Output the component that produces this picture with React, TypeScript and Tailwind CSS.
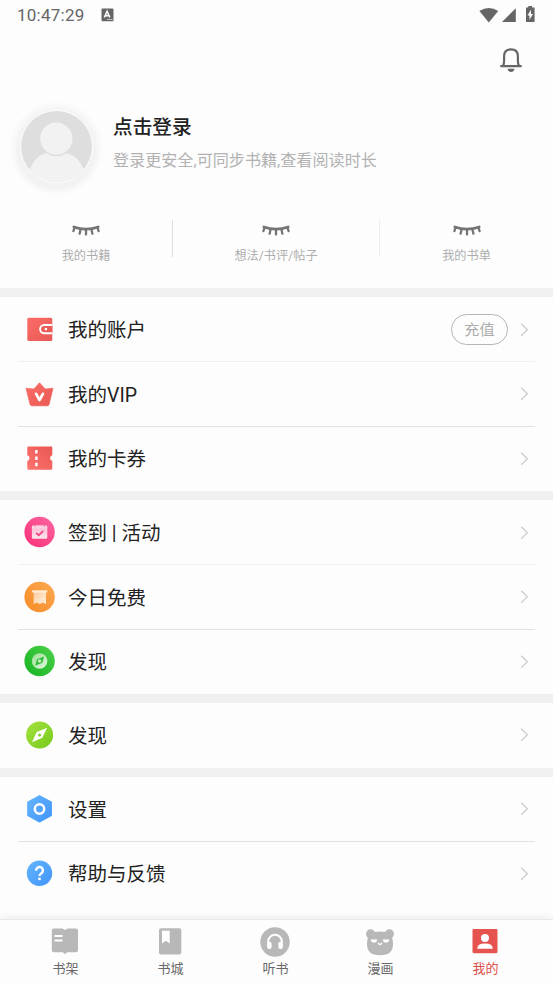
import type { ReactNode } from 'react';

const Sep = ({ strong }: { strong?: boolean }) => (
  <div className={`absolute left-[18px] right-[18px] h-px ${strong ? '-bottom-[0.4px] bg-[#e2e2e2]' : 'bottom-0 bg-[#f1f1f1]'}`} />
);

const Chevron = () => (
  <svg width="9" height="14" viewBox="0 0 9 14" fill="none" stroke="#cdcdcd" strokeWidth="1.3">
    <path d="M1.2 .7L7.4 6.7L1.2 12.7" />
  </svg>
);

function Row({ icon, label, sep, action }: { icon: ReactNode; label: string; sep?: 'soft' | 'strong'; action?: string }) {
  return (
    <div className="relative flex h-[64.5px] items-center pl-[23px] pr-6">
      <div className="flex w-[33px] shrink-0 justify-center">{icon}</div>
      <span className="ml-3 flex-1 pt-[3px] text-[19.5px] leading-7 text-[#222]">{label}</span>
      {action && (
        <span className="mr-3 flex h-[31px] w-[57px] items-center justify-center rounded-full border border-[#b5b5b5] pt-[2px] text-[15.2px] leading-none text-[#adadad]">
          {action}
        </span>
      )}
      <Chevron />
      {sep && <Sep strong={sep === 'strong'} />}
    </div>
  );
}

const Gap = () => <div className="h-[9.4px] bg-[#f0f0f0]" />;

const Grad = ({ id, from, to, flip }: { id: string; from: string; to: string; flip?: boolean }) => (
  <linearGradient id={id} x1={flip ? '1' : '0'} y1="0" x2={flip ? '0' : '1'} y2="1">
    <stop stopColor={from} />
    <stop offset="1" stopColor={to} />
  </linearGradient>
);

const Wallet = () => (
  <svg width="33" height="33" viewBox="0 0 33 33">
    <defs><Grad id="wal" from="#fb6d68" to="#ea5954" /></defs>
    <rect x="4.3" y="4.7" width="25" height="23.2" rx="1.5" fill="url(#wal)" />
    <path d="M29.4 11.9H21.3a4 4 0 0 0 0 8.4H29.4" fill="#e95b56" stroke="#fff" strokeWidth="2" />
    <circle cx="22.9" cy="16.1" r="1.3" fill="#fff" />
  </svg>
);

const Crown = () => (
  <svg width="33" height="33" viewBox="0 0 33 33">
    <defs><Grad id="crn" from="#fb6d68" to="#ea5954" /></defs>
    <path d="M16.5 4.8L22.3 11L30 10.2L26 26.6Q25.7 27.8 24.4 27.8H8.8Q7.4 27.8 7.1 26.6L3 10.2L10.9 11Z" fill="url(#crn)" stroke="url(#crn)" strokeLinejoin="round" strokeWidth=".7" />
    <path d="M13.1 15.8L16.5 22L19.9 15.8" fill="none" stroke="#fff" strokeWidth="2.7" strokeLinecap="round" strokeLinejoin="round" />
  </svg>
);

const Ticket = () => (
  <svg width="33" height="33" viewBox="0 0 33 33">
    <defs><Grad id="tic" from="#e95752" to="#fc7470" flip /></defs>
    <path d="M5.4 4.6H28.2Q29.3 4.6 29.3 5.7V13.2A3 3 0 0 0 29.3 19V26.6Q29.3 27.7 28.2 27.7H5.4Q4.3 27.7 4.3 26.6V19A3 3 0 0 0 4.3 13.2V5.7Q4.3 4.6 5.4 4.6Z" fill="url(#tic)" />
    <path d="M13.4 8v3.5M13.4 14.4v3.5M13.4 20.8v3.5" stroke="#fff" strokeWidth="2.4" />
  </svg>
);

const Calendar = () => (
  <svg width="33" height="33" viewBox="0 0 33 33">
    <defs>
      <Grad id="cal" from="#fb67a2" to="#fb2e76" flip />
      <linearGradient id="calp" x1="0" y1="0" x2="0" y2="1"><stop stopColor="#fcb5d0" /><stop offset="1" stopColor="#ffe6ee" /></linearGradient>
    </defs>
    <circle cx="16.6" cy="16" r="15.2" fill="url(#cal)" />
    <rect x="8.9" y="9.6" width="15.4" height="13.2" rx="1.5" fill="url(#calp)" />
    <path d="M8.9 12.4V11Q8.9 9.5 10.4 9.5H22.8Q24.3 9.5 24.3 11V12.4Z" fill="#ffd4e2" />
    <path d="M12 8.6v2.2M21.2 8.6v2.2" stroke="#f96e9f" strokeWidth="1.2" />
    <path d="M13.2 16.9L15.7 19.3L20.2 14.9" fill="none" stroke="#f43f7f" strokeWidth="1.7" />
  </svg>
);

const Banner = () => (
  <svg width="33" height="33" viewBox="0 0 33 33">
    <defs>
      <Grad id="ban" from="#fda950" to="#f68b28" flip />
      <linearGradient id="banp" x1="0" y1="0" x2="1" y2="1"><stop stopColor="#fccd9d" /><stop offset="1" stopColor="#fff0df" /></linearGradient>
    </defs>
    <circle cx="16.6" cy="16" r="15.2" fill="url(#ban)" />
    <path d="M10.7 11H23V23.2L20.2 21.5L16.9 22.9L13.6 21.5L10.7 23.2Z" fill="url(#banp)" />
    <rect x="9" y="9.2" width="15.4" height="2.5" rx="1.1" fill="#ffe9d0" />
  </svg>
);

const Discover = () => (
  <svg width="33" height="33" viewBox="0 0 33 33">
    <defs>
      <Grad id="dis" from="#4dd14b" to="#15b321" flip />
      <Grad id="disp" from="#99df95" to="#e0f8de" />
    </defs>
    <circle cx="16.6" cy="16" r="15.2" fill="url(#dis)" />
    <circle cx="16.6" cy="16" r="7.8" fill="url(#disp)" />
    <path d="M21 11.4L19.4 17.8L12.1 20.7L14 14.3Z" fill="#2fbb36" />
    <circle cx="16.6" cy="16" r="1.7" fill="#c6eec3" />
  </svg>
);

const Compass = () => (
  <svg width="33" height="33" viewBox="0 0 33 33">
    <defs><Grad id="com" from="#a5e23d" to="#76c91d" /></defs>
    <circle cx="16.6" cy="16" r="13.5" fill="url(#com)" />
    <path d="M24.2 8.7L19.3 18.8L9 23.3L13.7 13.1Z" fill="#fff" />
    <circle cx="16.6" cy="16" r="1.6" fill="#89d52a" />
  </svg>
);

const Settings = () => (
  <svg width="33" height="33" viewBox="0 0 33 33">
    <defs><Grad id="set" from="#64b5fc" to="#4194fb" /></defs>
    <path d="M16.5 2.7L28.3 9.1V22.5L16.5 29L4.8 22.5V9.1Z" fill="url(#set)" stroke="url(#set)" strokeWidth="1.2" strokeLinejoin="round" />
    <circle cx="16.5" cy="16" r="4.7" fill="none" stroke="#fff" strokeWidth="2.5" />
  </svg>
);

const Help = () => (
  <svg width="33" height="33" viewBox="0 0 33 33">
    <defs><Grad id="hlp" from="#64b5fc" to="#4194fb" /></defs>
    <circle cx="16.5" cy="16.3" r="12.7" fill="url(#hlp)" />
    <path d="M13.1 13.6a3.4 3.4 0 1 1 5.8 2.2c-1.4 1.2-2.4 1.7-2.4 3.2" fill="none" stroke="#fff" strokeWidth="2.4" />
    <circle cx="16.5" cy="21.9" r="1.4" fill="#fff" />
  </svg>
);

const Lashes = () => (
  <svg width="28" height="12" viewBox="0 0 28 12" fill="none" stroke="#757575" strokeWidth="2.3" strokeLinecap="round">
    <path d="M1.8 2Q14 6.4 26.2 2" strokeWidth="2.7" />
    <path d="M2.6 2.4L1.4 6.1M8.6 4.2L7.6 8.7M14 5v4.5M19.4 4.2l1 4.5M25.4 2.4l1.2 3.7" />
  </svg>
);

const Stat = ({ label }: { label: string }) => (
  <div className="flex flex-col items-center">
    <Lashes />
    <span className="mt-[9px] text-[12.2px] leading-5 text-[#aeaeae]">{label}</span>
  </div>
);

function Tab({ label, icon, active }: { label: string; icon: ReactNode; active?: boolean }) {
  return (
    <div className="flex w-[105px] flex-col items-center">
      <svg width="32" height="32" viewBox="0 0 32 32">{icon}</svg>
      <span className={`mt-[2px] pl-px text-[13px] leading-5 ${active ? 'text-[#dc4f4a]' : 'text-[#686868]'}`}>{label}</span>
    </div>
  );
}

export default function App() {
  return (
    <div className="flex h-[984px] w-[553px] flex-col overflow-hidden bg-[#fdfdfd] font-['Roboto','Noto_Sans_CJK_SC',sans-serif]">
      <header className="flex h-[30px] shrink-0 items-center justify-between pl-[17px] pr-[18px] text-[#666]">
        <div className="flex items-center">
          <span className="text-[17px] leading-[30px] tracking-[0.25px]">10:47:29</span>
          <svg className="ml-4" width="13" height="14" viewBox="0 0 13 14">
            <rect x=".5" y=".6" width="12" height="12.7" rx="1" fill="#666" />
            <path d="M3.4 9.4L6.1 3.3L8.8 9.4M4.3 7.7H7.9" fill="none" stroke="#fff" strokeWidth="1.5" />
            <path d="M6.4 11.4h5" stroke="#fff" strokeWidth="1" strokeDasharray="1.2 .8" />
          </svg>
        </div>
        <svg width="57" height="18" viewBox="0 0 57 18" fill="#666">
          <path d="M.9 4.2Q10.3-2 19.7 4.2L10.3 15.6Z" transform="translate(.5 .8)" />
          <path d="M37.8 2.3V16H24Z" />
          <path d="M50.3 0h3.8v1.6H56.6V16H48V1.6h2.3Z" />
          <path d="M53 3.8L49.5 9.4h2v4.4L55 8.1h-2Z" fill="#fdfdfd" />
        </svg>
      </header>

      <div className="flex h-[60px] shrink-0 justify-end pr-[30px] pt-4">
        <svg width="24" height="26" viewBox="0 0 24 26" fill="none" stroke="#666" strokeWidth="2.2">
          <path d="M1.3 20.1H22.7M4.2 19.5Q5.1 17.6 5.1 14.7V10.3Q5.1 3.3 12 3.3T18.9 10.3V14.7Q18.9 17.6 19.8 19.5" />
          <path d="M8.5 22.7h7Q14.8 25.9 12 25.9T8.5 22.7Z" fill="#666" stroke="none" />
        </svg>
      </div>

      <div className="flex h-[128px] shrink-0 pl-5">
        <div className="mt-5 h-[73px] w-[73px] shrink-0 overflow-hidden rounded-full border-[1.5px] border-white bg-[#dedede] shadow-[0_2px_7px_6px_#f3f3f3,0_4px_6px_#d8d8d8]">
          <svg width="71" height="71" viewBox="0 0 72 72" fill="#f2f2f2">
            <path d="M9 60Q14 45 26 42.8Q36 49 46 42.8Q58 45 64 60V73H9Z" />
            <circle cx="35.8" cy="28" r="17" stroke="#dedede" strokeWidth="1.2" />
          </svg>
        </div>
        <div className="ml-5 pt-6">
          <div className="text-[19.7px] font-medium leading-7 text-[#222]">点击登录</div>
          <div className="mt-[7px] text-[16.1px] leading-6 text-[#b2b2b2]">登录更安全,可同步书籍,查看阅读时长</div>
        </div>
      </div>

      <div className="flex h-[70px] shrink-0 pt-[2px]">
        <div className="flex w-[172px] justify-center pt-[5px]"><Stat label="我的书籍" /></div>
        <div className="h-[37px] w-px bg-[#dedede]" />
        <div className="flex w-[206px] justify-center pt-[5px]"><Stat label="想法/书评/帖子" /></div>
        <div className="h-[37px] w-px bg-[#eee]" />
        <div className="flex flex-1 justify-center pt-[5px]"><Stat label="我的书单" /></div>
      </div>

      <main className="h-[631px] shrink-0">
        <Gap />
        <Row icon={<Wallet />} label="我的账户" sep="soft" action="充值" />
        <Row icon={<Crown />} label="我的VIP" sep="strong" />
        <Row icon={<Ticket />} label="我的卡券" />
        <Gap />
        <Row icon={<Calendar />} label="签到 | 活动" sep="soft" />
        <Row icon={<Banner />} label="今日免费" sep="strong" />
        <Row icon={<Discover />} label="发现" />
        <Gap />
        <Row icon={<Compass />} label="发现" />
        <Gap />
        <Row icon={<Settings />} label="设置" sep="strong" />
        <Row icon={<Help />} label="帮助与反馈" />
      </main>

      <nav className="relative flex flex-1 border-t border-[#e9e9e9] bg-[#fdfdfd] pl-[12.5px] pt-[5px] shadow-[0_-2px_7px_#eeeeee]">
        <Tab label="书架" icon={
          <>
            <path d="M4.8 3.4H13.5L16 5L18.5 3.4H27Q29 3.4 29 5.4V25.2Q29 27.2 27 27.2H18.2L16 29.3L13.8 27.2H4.8Q2.8 27.2 2.8 25.2V5.4Q2.8 3.4 4.8 3.4Z" fill="#b8b8b8" />
            <path d="M5.5 11h8M5.5 15.4h8" stroke="#fff" strokeWidth="2" />
          </>
        } />
        <Tab label="书城" icon={
          <>
            <rect x="5" y="3.2" width="22.3" height="26.2" rx="2" fill="#b8b8b8" />
            <path d="M8 5.8h7.7v12.7L11.9 15.8L8 18.5Z" fill="#fff" />
          </>
        } />
        <Tab label="听书" icon={
          <>
            <circle cx="16" cy="17" r="14.7" fill="#b8b8b8" />
            <path d="M9.2 18.5V16.5a6.8 6.8 0 0 1 13.6 0V18.5" fill="none" stroke="#fff" strokeWidth="2" />
            <rect x="8.1" y="16.7" width="4.5" height="7.2" rx="2" fill="#fff" />
            <rect x="19.4" y="16.7" width="4.5" height="7.2" rx="2" fill="#fff" />
          </>
        } />
        <Tab label="漫画" icon={
          <>
            <g fill="#b8b8b8">
              <circle cx="6.7" cy="9" r="4.7" />
              <circle cx="25.3" cy="9" r="4.7" />
              <path d="M16 6.5C25 6.5 29 10.5 29 19C29 26.5 25 30.2 16 30.2S3 26.5 3 19C3 10.5 7 6.5 16 6.5Z" />
            </g>
            <path d="M6.6 14.5H13.2Q13 17.6 10 17.6T6.6 14.5ZM18.8 14.5H25.4Q25 17.6 22 17.6T18.8 14.5Z" fill="#fff" />
            <path d="M14.1 17.6Q14.4 19.5 16 19.5T17.9 17.6" fill="none" stroke="#fff" strokeWidth="1.4" />
          </>
        } />
        <Tab label="我的" active icon={
          <>
            <rect x="3.5" y="4" width="25" height="24.2" rx="1.4" fill="#e5544e" />
            <circle cx="16" cy="13" r="4" fill="#fff" />
            <path d="M8.2 23.7Q8.2 18.4 16 18.4T23.8 23.7Z" fill="#fff" />
          </>
        } />
      </nav>
    </div>
  );
}
